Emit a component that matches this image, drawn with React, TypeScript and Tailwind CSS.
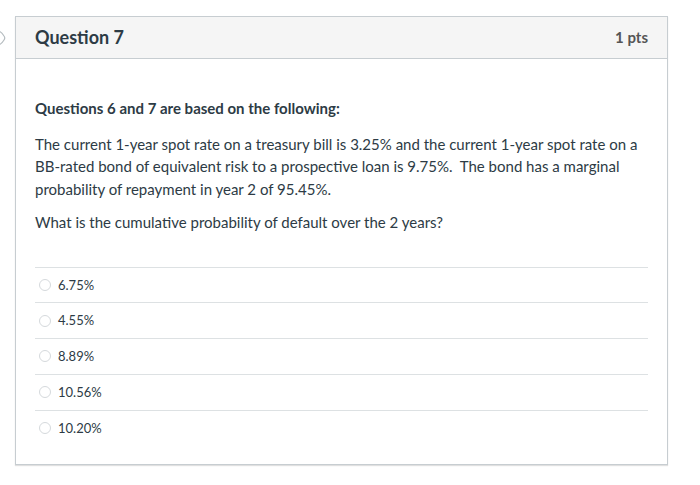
const answers = ["6.75%", "4.55%", "8.89%", "10.56%", "10.20%"];

export default function App() {
  return (
    <div className="w-[700px] h-[485px] bg-white flex pt-[16px] text-[#2d3b45]" style={{ fontFamily: "Lato, 'Noto Sans', sans-serif" }}>
      <div className="w-[15px] shrink-0 pt-[14px]">
        <svg width="15" height="16" viewBox="0 0 15 16">
          <path d="M-2 1 Q1 1 4 6 Q5.5 8 4 10 Q1 15 -2 15" fill="none" stroke="#b4bbbf" strokeWidth="1.2" />
        </svg>
      </div>
      <div className="w-[653px] h-[449px] border border-[#c7cdd1] shadow-[0_1px_1px_rgba(0,0,0,0.12)] flex flex-col">
        <div className="h-[42px] bg-[#f5f5f5] border-b border-[#c7cdd1] flex items-center justify-between pl-[19px] pr-[19px]">
          <div className="text-[18px] font-bold text-[#2d3b45]">Question 7</div>
          <div className="text-[15px] font-bold text-[#555]">1 pts</div>
        </div>
        <div className="pl-[19px] pr-[19px] pt-[38px] text-[15px] leading-[22.5px]">
          <p className="font-bold">Questions 6 and 7 are based on the following:</p>
          <p className="mt-[13px]">
            The current 1-year spot rate on a treasury bill is 3.25% and the current 1-year spot rate on a BB-rated bond of equivalent risk to a prospective loan is 9.75%.&nbsp; The bond has a marginal probability of repayment in year 2 of 95.45%.
          </p>
          <p className="mt-[11px]">What is the cumulative probability of default over the 2 years?</p>
          <div className="mt-[33px] flex flex-col">
            {answers.map((a) => (
              <div key={a} className="h-[35.75px] border-t border-[#dde1e3] flex items-center gap-[7px] pl-[4px] text-[13px]">
                <span className="w-[12px] h-[12px] rounded-full border border-[#d5d9dc] bg-white"></span>
                <span>{a}</span>
              </div>
            ))}
          </div>
        </div>
      </div>
    </div>
  );
}
